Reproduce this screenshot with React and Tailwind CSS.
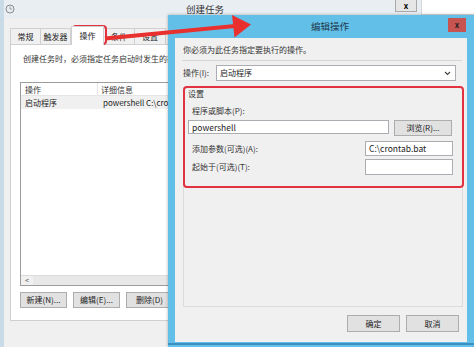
import React from "react";

const F = { fontFamily: '"Noto Sans CJK SC", "Noto Sans", sans-serif' };

function Btn({ children, className = "" }) {
  return (
    <div className={"flex items-center justify-center border border-[#adadad] bg-[#e1e1e1] text-[8px] text-[#222] " + className}>
      {children}
    </div>
  );
}

function BackWindow() {
  return (
    <div className="absolute left-0 top-0 w-[474px] h-[347px] bg-[#f0f0f0] border-l-[4px] border-[#c8dbe7] flex flex-col">
      {/* title bar */}
      <div className="h-[18px] bg-[#e9eef2] flex items-center relative">
        <svg width="10" height="10" viewBox="0 0 10 10" className="ml-[1px]">
          <circle cx="5" cy="5" r="4" fill="none" stroke="#8a8a8a" strokeWidth="1" />
          <path d="M5 2.5V5H7" fill="none" stroke="#8a8a8a" strokeWidth="0.8" />
        </svg>
        <div className="absolute left-[182px] top-[2px] text-[9.5px] text-[#333]">创建任务</div>
        <div className="absolute left-[391px] top-0 w-[22px] h-[12px] bg-[#e6e6e6] border border-t-0 border-[#a9a9a9] flex items-center justify-center text-[8px] font-bold text-black leading-none">x</div>
        <div className="absolute left-[417px] top-0 w-[60px] h-[15px] bg-white border-b border-l border-[#d6d6d6]"></div>
      </div>
      {/* tabs */}
      <div className="ml-[6px] mt-[7px] flex items-end h-[19px]">
        <div className="h-[16px] w-[31px] border border-[#d0d0d0] border-b-0 flex items-center justify-center text-[8px] text-[#222]">常规</div>
        <div className="h-[16px] w-[30px] border border-[#d0d0d0] border-b-0 border-l-0 flex items-center justify-center text-[8px] text-[#222]">触发器</div>
        <div className="h-[19px] w-[33px] bg-white border border-[#d0d0d0] border-b-0 flex items-start pt-[3px] justify-center text-[8px] text-[#222] relative z-10 -mb-px">操作</div>
        <div className="h-[16px] w-[31px] border border-[#d0d0d0] border-b-0 border-l-0 flex items-center justify-center text-[8px] text-[#222]">条件</div>
        <div className="h-[16px] w-[31px] border border-[#d0d0d0] border-b-0 border-l-0 flex items-center justify-center text-[8px] text-[#222]">设置</div>
      </div>
      {/* panel */}
      <div className="ml-[6px] h-[277px] bg-white border border-[#d0d0d0] flex flex-col pl-[9px]">
        <div className="mt-[8px] ml-[3px] text-[8px] text-[#333] leading-[11px] whitespace-nowrap">创建任务时，必须指定任务启动时发生的操作。</div>
        <div className="mt-[18px] h-[204px] w-[300px] border border-[#9c9c9c] flex flex-col">
          <div className="h-[13px] flex text-[8px] text-[#333] border-b border-[#e5e5e5] leading-[13px]">
            <div className="w-[77px] pl-[4px] border-r border-[#e5e5e5]">操作</div>
            <div className="pl-[3px]">详细信息</div>
          </div>
          <div className="h-[13px] flex text-[8px] text-[#222] bg-[#f0f0f0] leading-[13px]">
            <div className="w-[78px] pl-[4px]">启动程序</div>
            <div className="pl-[4px] whitespace-nowrap">powershell C:\crontab.bat</div>
          </div>
          <div className="flex-1"></div>
          <div className="h-[10px] bg-[#e8e8e8] border-t border-[#dcdcdc] flex items-center">
            <div className="w-[12px] h-full bg-[#f0f0f0] flex items-center justify-center text-[7px] text-[#555] leading-none">&lt;</div>
          </div>
        </div>
        <div className="mt-[6px] flex gap-[6px]">
          <Btn className="w-[47px] h-[16px]">新建(N)...</Btn>
          <Btn className="w-[47px] h-[16px]">编辑(E)...</Btn>
          <Btn className="w-[47px] h-[16px]">删除(D)</Btn>
        </div>
      </div>
    </div>
  );
}

function Field({ className = "", children }) {
  return (
    <div className={"bg-white border border-[#abadb3] flex items-center pl-[3px] text-[8.5px] text-[#222] " + className}>
      {children}
    </div>
  );
}

function Dialog() {
  return (
    <div className="absolute left-[168px] top-[15px] w-[306px] h-[332px] bg-[#62c0e8] flex flex-col shadow-[0_0_3px_rgba(0,0,0,0.3)]">
      <div className="h-[23px] flex items-center justify-center relative">
        <div className="text-[9.5px] text-[#1d3a4e] ml-[18px]">编辑操作</div>
        <div className="absolute left-[280px] top-[3px] w-[18px] h-[14px] bg-[#c75451] flex items-center justify-center text-[8px] font-bold text-[#222] leading-none">x</div>
      </div>
      <div className="mx-[7px] h-[304px] bg-[#f0f0f0] flex flex-col relative">
        <div className="ml-[8px] mt-[6px] text-[8px] leading-[11px] text-[#333]">你必须为此任务指定要执行的操作。</div>
        <div className="ml-[7px] mt-[5px] w-[280px] h-px bg-[#d5d5d5]"></div>
        <div className="mt-[4px] flex items-center h-[16px]">
          <div className="ml-[8px] w-[33px] text-[8px] text-[#333]">操作(I):</div>
          <div className="w-[240px] h-[16px] bg-white border border-[#abadb3] flex items-center justify-between pl-[3px] pr-[4px] text-[8px] text-[#222]">
            <span>启动程序</span>
            <svg width="7" height="5" viewBox="0 0 7 5"><path d="M1 1l2.5 2.5L6 1" fill="none" stroke="#444" strokeWidth="1.1" /></svg>
          </div>
        </div>
        <div className="ml-[8px] mt-[6px] w-[280px] h-[220px] border border-[#dcdcdc] flex flex-col">
          <div className="ml-[4px] text-[8px] leading-[11px] text-[#333]">设置</div>
          <div className="ml-[8px] mt-[6px] text-[8px] leading-[11px] text-[#333]">程序或脚本(P):</div>
          <div className="mt-[4px] flex items-start">
            <Field className="ml-[4px] w-[201px] h-[14px]">powershell</Field>
            <Btn className="ml-[5px] w-[58px] h-[16px]">浏览(R)...</Btn>
          </div>
          <div className="mt-[5px] flex items-center justify-between h-[15px]">
            <div className="ml-[8px] text-[8px] text-[#333]">添加参数(可选)(A):</div>
            <Field className="mr-[9px] w-[88px] h-[15px]">C:\crontab.bat</Field>
          </div>
          <div className="mt-[3px] flex items-center justify-between h-[16px]">
            <div className="ml-[8px] text-[8px] text-[#333]">起始于(可选)(T):</div>
            <Field className="mr-[9px] w-[88px] h-[16px]"></Field>
          </div>
        </div>
        <div className="mt-[8px] flex justify-end gap-[6px] pr-[8px]">
          <Btn className="w-[53px] h-[17px]">确定</Btn>
          <Btn className="w-[53px] h-[17px]">取消</Btn>
        </div>
      </div>
      <div className="h-[2px] bg-[#3c8fbf] mt-px"></div>
    </div>
  );
}

export default function App() {
  return (
    <div className="relative w-[474px] h-[347px] overflow-hidden bg-[#f0f0f0]" style={F}>
      <BackWindow />
      <Dialog />
      {/* annotations */}
      <div className="absolute left-[72px] top-[25px] w-[35px] h-[20px] border-2 border-[#e2323f] rounded-[4px]"></div>
      <div className="absolute left-[183px] top-[86px] w-[281px] h-[102px] border-2 border-[#e2323f] rounded-[4px]"></div>
      <svg className="absolute left-0 top-0" width="474" height="347" viewBox="0 0 474 347">
        <line x1="105" y1="38.5" x2="235" y2="26" stroke="#e8312f" strokeWidth="4" />
        <polygon points="251,24.5 232,15 234.5,37.5" fill="#e8312f" />
      </svg>
    </div>
  );
}
